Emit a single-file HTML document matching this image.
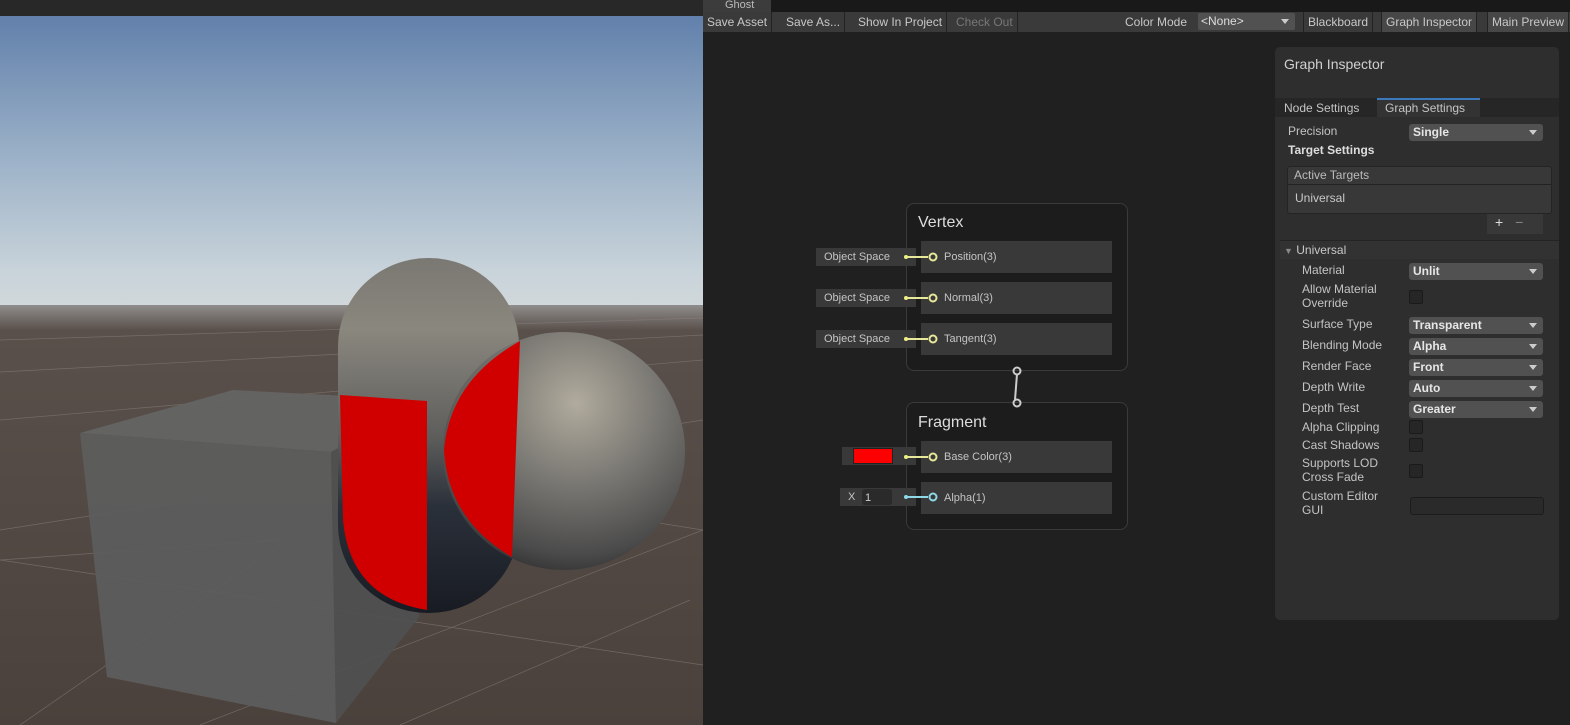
<!DOCTYPE html>
<html><head><style>
*{margin:0;padding:0;box-sizing:border-box}
body{width:1570px;height:725px;overflow:hidden;background:#1e1e1e;font-family:"Liberation Sans",sans-serif;position:relative}
.a{position:absolute}
.tb{color:#c8c8c8;font-size:12px;line-height:20px;white-space:nowrap}
.btn{position:absolute;top:12px;height:20px;background:#3a3a3a;padding:0 4px;border-right:1px solid #232323}
.lbl{position:absolute;left:1302px;color:#c4c4c4;font-size:12px;line-height:14px}
.dd{position:absolute;left:1409px;width:134px;height:17px;background:#515151;border-radius:3px;color:#e6e6e6;font-weight:bold;font-size:12px;line-height:17px;padding-left:4px}
.dd:after{content:"";position:absolute;right:6px;top:6px;border-left:4px solid transparent;border-right:4px solid transparent;border-top:5px solid #ccc}
.cb{position:absolute;left:1409px;width:14px;height:14px;background:#262626;border:1px solid #1a1a1a;border-radius:2px}
.port{position:absolute;left:921px;width:191px;height:32px;background:#393939;color:#c4c4c4;font-size:11px;line-height:32px;padding-left:23px}
.in{position:absolute;height:18px;background:#393939;color:#c4c4c4;font-size:11px;line-height:18px}
</style></head><body>
<svg class="a" style="left:0;top:0" width="703" height="725">
<defs>
<linearGradient id="sky" x1="0" y1="0" x2="0" y2="1"><stop offset="0" stop-color="#6180ab"/><stop offset="0.5" stop-color="#9fb4c9"/><stop offset="0.85" stop-color="#c8d3da"/><stop offset="1" stop-color="#d3d9db"/></linearGradient>
<linearGradient id="gr" x1="0" y1="0" x2="0" y2="1"><stop offset="0" stop-color="#8f8d8b"/><stop offset="0.06" stop-color="#5a504b"/><stop offset="1" stop-color="#4b413c"/></linearGradient>
<radialGradient id="sp" cx="0.55" cy="0.3" r="0.75"><stop offset="0" stop-color="#b0ab9d"/><stop offset="0.45" stop-color="#7a7873"/><stop offset="0.85" stop-color="#4a4a4a"/><stop offset="1" stop-color="#2e2e30"/></radialGradient>
<linearGradient id="cp" x1="0" y1="0" x2="0" y2="1"><stop offset="0" stop-color="#7a7872"/><stop offset="0.2" stop-color="#8a877e"/><stop offset="0.5" stop-color="#5e5e5c"/><stop offset="0.7" stop-color="#2a303a"/><stop offset="1" stop-color="#181b22"/></linearGradient>
</defs>
<rect x="0" y="16" width="703" height="300" fill="url(#sky)"/>
<rect x="0" y="0" width="703" height="16" fill="#282828"/>
<rect x="0" y="305" width="703" height="420" fill="url(#gr)"/>
<g stroke="#8a807c" stroke-width="0.7" opacity="0.6">
<line x1="0" y1="340" x2="703" y2="318"/><line x1="0" y1="372" x2="703" y2="335"/><line x1="0" y1="420" x2="703" y2="360"/><line x1="0" y1="530" x2="703" y2="420"/><line x1="200" y1="725" x2="703" y2="530"/>
<line x1="0" y1="560" x2="280" y2="540"/><line x1="400" y1="725" x2="690" y2="600"/><line x1="640" y1="520" x2="703" y2="530"/><line x1="0" y1="560" x2="703" y2="665"/><line x1="20" y1="725" x2="280" y2="545"/>
</g>
<polygon points="331,452 425,400 419,617 336,723" fill="#505050" opacity="0.92"/>
<polygon points="80,433 233,390 425,400 331,452" fill="#646464" opacity="0.95"/>
<polygon points="80,433 331,452 336,723 107,677" fill="#5d5d5d" opacity="0.95"/>
<rect x="338" y="258" width="181" height="355" rx="90" ry="88" fill="url(#cp)"/>
<path d="M340 395 L427 401 L427 610 Q350 598 343 520 Z" fill="#d00000"/>
<ellipse cx="564" cy="451" rx="121" ry="119" fill="url(#sp)"/>
<path d="M520 341 Q450 380 444 450 Q448 520 512 557 Z" fill="#d00000"/>
</svg>
<div class="a" style="left:703px;top:0;width:867px;height:725px;background:#202020"></div>
<div class="a" style="left:703px;top:0;width:867px;height:12px;background:#191919"></div>
<div class="a" style="left:703px;top:0;width:68px;height:12px;background:#3c3c3c;color:#bbb;font-size:11px;line-height:10px;padding-left:22px">Ghost</div>
<div class="a" style="left:703px;top:12px;width:867px;height:20px;background:#3a3a3a"></div>
<div class="btn tb" style="left:703px">Save Asset</div>
<div class="btn tb" style="left:782px">Save As...</div>
<div class="btn tb" style="left:854px">Show In Project</div>
<div class="btn tb" style="left:952px;color:#777">Check Out</div>
<div class="a tb" style="left:1125px;top:12px">Color Mode</div>
<div class="a" style="left:1198px;top:13px;width:97px;height:17px;background:#515151;border-radius:2px;color:#ddd;font-size:12px;line-height:17px;padding-left:3px">&lt;None&gt;<span style="position:absolute;right:6px;top:6px;border-left:4px solid transparent;border-right:4px solid transparent;border-top:5px solid #ccc"></span></div>
<div class="btn tb" style="left:1303px;border-left:1px solid #232323">Blackboard</div>
<div class="btn tb" style="left:1381px;background:#474747;border-left:1px solid #232323">Graph Inspector</div>
<div class="btn tb" style="left:1487px;background:#474747;border-left:1px solid #232323">Main Preview</div>
<div class="a" style="left:906px;top:203px;width:222px;height:168px;border:1px solid #3a3a3a;border-radius:8px;background:#1c1c1c"></div>
<div class="a" style="left:918px;top:214px;color:#ddd;font-size:16px">Vertex</div>
<div class="a" style="left:906px;top:402px;width:222px;height:128px;border:1px solid #3a3a3a;border-radius:8px;background:#1c1c1c"></div>
<div class="a" style="left:918px;top:414px;color:#ddd;font-size:16px">Fragment</div>
<div class="port" style="top:241px">Position(3)</div>
<div class="port" style="top:282px">Normal(3)</div>
<div class="port" style="top:323px">Tangent(3)</div>
<div class="port" style="top:441px">Base Color(3)</div>
<div class="port" style="top:482px">Alpha(1)</div>
<div class="in" style="left:816px;top:248px;width:100px;padding-left:8px">Object Space</div>
<div class="in" style="left:816px;top:289px;width:100px;padding-left:8px">Object Space</div>
<div class="in" style="left:816px;top:330px;width:100px;padding-left:8px">Object Space</div>
<div class="in" style="left:842px;top:447px;width:74px"><div class="a" style="left:11px;top:1px;width:40px;height:16px;background:#f00;border:1px solid #222"></div></div>
<div class="in" style="left:840px;top:488px;width:76px;padding-left:8px">X<div class="a" style="left:22px;top:1px;width:30px;height:16px;background:#2a2a2a;border-radius:3px;padding-left:3px;color:#ccc">1</div></div>
<svg class="a" style="left:900px;top:240px" width="140" height="280">
<g stroke="#e8e89a" stroke-width="2" fill="none">
<line x1="7" y1="17" x2="28" y2="17"/><circle cx="33" cy="17" r="3.5"/>
<line x1="7" y1="58" x2="28" y2="58"/><circle cx="33" cy="58" r="3.5"/>
<line x1="7" y1="99" x2="28" y2="99"/><circle cx="33" cy="99" r="3.5"/>
<line x1="7" y1="217" x2="28" y2="217"/><circle cx="33" cy="217" r="3.5"/>
</g>
<g stroke="#8ed8e8" stroke-width="2" fill="none"><line x1="7" y1="257" x2="28" y2="257"/><circle cx="33" cy="257" r="3.5"/></g>
<g fill="#f0f080"><circle cx="6" cy="17" r="2"/><circle cx="6" cy="58" r="2"/><circle cx="6" cy="99" r="2"/><circle cx="6" cy="217" r="2"/></g>
<circle cx="6" cy="257" r="2" fill="#8ed8e8"/>
<g stroke="#ccc" stroke-width="2" fill="none"><path d="M117 134 L115 160"/><circle cx="117" cy="131" r="3.5"/><circle cx="117" cy="163" r="3.5"/></g>
</svg>
<div class="a" style="left:1275px;top:47px;width:284px;height:573px;background:#2e2e2e;border-radius:5px"></div>
<div class="a" style="left:1284px;top:56px;color:#d0d0d0;font-size:14px">Graph Inspector</div>
<div class="a" style="left:1275px;top:98px;width:284px;height:19px;background:#262626"></div>
<div class="a" style="left:1284px;top:101px;color:#c4c4c4;font-size:12px">Node Settings</div>
<div class="a" style="left:1377px;top:98px;width:103px;height:19px;background:#333;border-top:2px solid #3a79bb;color:#c4c4c4;font-size:12px;padding:1px 0 0 8px">Graph Settings</div>
<div class="lbl" style="left:1288px;top:124px">Precision</div>
<div class="dd" style="top:124px">Single</div>
<div class="lbl" style="left:1288px;top:143px;font-weight:bold;color:#ddd">Target Settings</div>
<div class="a" style="left:1287px;top:166px;width:265px;height:48px;background:#383838;border:1px solid #242424;border-radius:3px"></div>
<div class="a" style="left:1288px;top:184px;width:263px;height:1px;background:#222"></div>
<div class="a" style="left:1294px;top:168px;color:#bbb;font-size:12px">Active Targets</div>
<div class="a" style="left:1295px;top:191px;color:#c8c8c8;font-size:12px">Universal</div>
<div class="a" style="left:1487px;top:214px;width:56px;height:20px;background:#383838;color:#ddd;font-size:14px;padding-left:8px">+ <span style="color:#888;margin-left:8px">−</span></div>
<div class="a" style="left:1280px;top:240px;width:279px;height:1px;background:#242424"></div>
<div class="a" style="left:1280px;top:241px;width:279px;height:18px;background:#323232;color:#c8c8c8;font-size:12px;line-height:18px;padding-left:4px"><span style="font-size:9px;color:#888">▼</span> Universal</div>
<div class="lbl" style="top:263px">Material</div><div class="dd" style="top:263px">Unlit</div>
<div class="lbl" style="top:282px">Allow Material<br>Override</div><div class="cb" style="top:290px"></div>
<div class="lbl" style="top:317px">Surface Type</div><div class="dd" style="top:317px">Transparent</div>
<div class="lbl" style="top:338px">Blending Mode</div><div class="dd" style="top:338px">Alpha</div>
<div class="lbl" style="top:359px">Render Face</div><div class="dd" style="top:359px">Front</div>
<div class="lbl" style="top:380px">Depth Write</div><div class="dd" style="top:380px">Auto</div>
<div class="lbl" style="top:401px">Depth Test</div><div class="dd" style="top:401px">Greater</div>
<div class="lbl" style="top:420px">Alpha Clipping</div><div class="cb" style="top:420px"></div>
<div class="lbl" style="top:438px">Cast Shadows</div><div class="cb" style="top:438px"></div>
<div class="lbl" style="top:456px">Supports LOD<br>Cross Fade</div><div class="cb" style="top:464px"></div>
<div class="lbl" style="top:489px">Custom Editor<br>GUI</div>
<div class="a" style="left:1410px;top:497px;width:134px;height:18px;background:#2a2a2a;border:1px solid #1c1c1c;border-radius:3px"></div>
</body></html>
